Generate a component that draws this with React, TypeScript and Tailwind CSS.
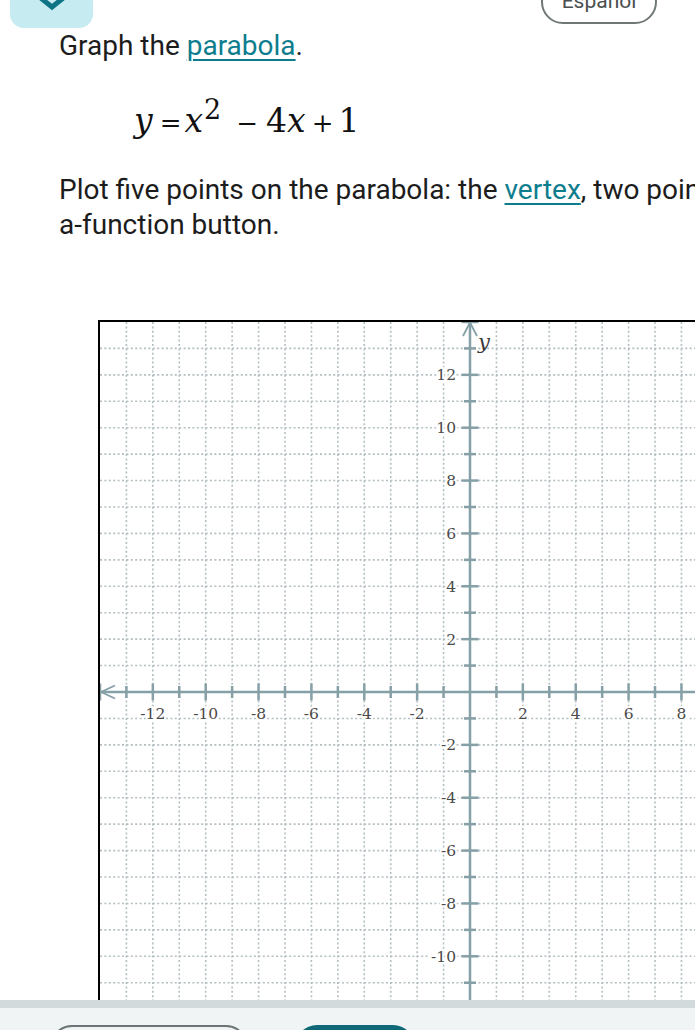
import React from "react";

const U = 26.43;
const O = 370;
const SIZE = 740;
const AXIS = "#85a0a6";
const GRID = "#b3bec1";
const LABEL = "#4a4a4a";

function range(a: number, b: number) {
  const r: number[] = [];
  for (let i = a; i <= b; i++) r.push(i);
  return r;
}

function Graph() {
  const idx = range(-14, 14).filter((i) => i !== 0);
  return (
    <svg width={SIZE} height={SIZE} viewBox={`0 0 ${SIZE} ${SIZE}`} className="block">
      {idx
        .filter((i) => i !== -14)
        .map((i) => (
          <line
            key={"v" + i}
            x1={O + i * U}
            y1={0}
            x2={O + i * U}
            y2={SIZE}
            stroke={GRID}
            strokeWidth={1.6}
            strokeDasharray="2 2.4"
          />
        ))}
      {idx
        .filter((i) => i !== 14)
        .map((i) => (
          <line
            key={"h" + i}
            x1={0}
            y1={O - i * U}
            x2={SIZE}
            y2={O - i * U}
            stroke={GRID}
            strokeWidth={1.6}
            strokeDasharray="2 2.4"
          />
        ))}
      <line x1={1} y1={O} x2={SIZE} y2={O} stroke={AXIS} strokeWidth={2.5} />
      <line x1={O} y1={1} x2={O} y2={SIZE} stroke={AXIS} strokeWidth={2.5} />
      <polyline points={`15,${O - 6.5} 1,${O} 15,${O + 6.5}`} fill="none" stroke={AXIS} strokeWidth={1.8} />
      <polyline points={`${O - 7},14 ${O},0.5 ${O + 7},14`} fill="none" stroke={AXIS} strokeWidth={1.8} />
      {idx.map((i) => {
        const len = i % 2 === 0 ? 8.5 : 6;
        const x = O + i * U;
        return <line key={"tx" + i} x1={x} y1={O - len} x2={x} y2={O + len} stroke={AXIS} strokeWidth={2.5} />;
      })}
      {idx.map((i) => {
        const len = i % 2 === 0 ? 8.5 : 6;
        const y = O - i * U;
        return <line key={"ty" + i} x1={O - len} y1={y} x2={O + len} y2={y} stroke={AXIS} strokeWidth={2.5} />;
      })}
      {idx
        .filter((i) => i % 2 === 0 && Math.abs(i) < 14)
        .map((i) => (
          <text
            key={"lx" + i}
            x={O + i * U}
            y={O + 27}
            textAnchor="middle"
            fontFamily="'DejaVu Serif', serif"
            fontSize={15.5}
            fill={LABEL}
            stroke="#ffffff"
            strokeWidth={4}
            paintOrder="stroke"
          >
            {i < 0 ? "-" + Math.abs(i) : String(i)}
          </text>
        ))}
      {idx
        .filter((i) => i % 2 === 0 && Math.abs(i) < 14)
        .map((i) => (
          <text
            key={"ly" + i}
            x={O - 14}
            y={O - i * U + 5.5}
            textAnchor="end"
            fontFamily="'DejaVu Serif', serif"
            fontSize={15.5}
            fill={LABEL}
            stroke="#ffffff"
            strokeWidth={4}
            paintOrder="stroke"
          >
            {i < 0 ? "-" + Math.abs(i) : String(i)}
          </text>
        ))}
      <text x={O + 8} y={27} fontFamily="'DejaVu Serif', serif" fontStyle="italic" fontSize={21} fill="#3a3a3a">
        y
      </text>
    </svg>
  );
}

export default function App() {
  return (
    <div className="relative w-[695px] h-[1030px] overflow-hidden bg-white font-['Roboto',sans-serif] text-[#1c1c1c]">
      <div className="flex h-[28px] items-start justify-between">
        <div className="ml-[10px] flex h-[28px] w-[83px] justify-center rounded-b-[14px] bg-[#c6ecf1]">
          <svg width="40" height="14" viewBox="0 0 40 14" className="overflow-visible">
            <path d="M5 -5 L20 7 L35 -5" fill="none" stroke="#0e7384" strokeWidth={5} />
          </svg>
        </div>
        <div className="mr-[38px] -mt-[20px] flex h-[44px] w-[116px] items-center justify-center rounded-full border-2 border-[#6f7777] text-[21px] text-[#4a4f4f]">
          Español
        </div>
      </div>

      <p className="pl-[59px] text-[28px] leading-[35px]">
        Graph the{" "}
        <span className="text-[#0d7d8e] underline decoration-[#0d7d8e] decoration-2 underline-offset-[4px]">
          parabola
        </span>
        .
      </p>

      <div className="mt-[38px] flex h-[40px] items-baseline pl-[134px] font-['DejaVu_Serif',serif] text-[33px] leading-[40px] text-[#111]">
        <span className="italic">y</span>
        <span className="ml-[7px] text-[26px]">=</span>
        <span className="ml-[3px] italic">x</span>
        <span className="relative -top-[13px] ml-[1px] text-[27px]">2</span>
        <span className="ml-[15px] text-[26px]">−</span>
        <span className="ml-[8px]">4</span>
        <span className="italic">x</span>
        <span className="ml-[6px] text-[26px]">+</span>
        <span className="ml-[5px]">1</span>
      </div>

      <p className="mt-[31px] whitespace-nowrap pl-[59px] text-[28px] leading-[35px]">
        Plot five points on the parabola: the{" "}
        <span className="text-[#0d7d8e] underline decoration-[#0d7d8e] decoration-2 underline-offset-[4px]">
          vertex
        </span>
        , two points to the left of the vertex, and two points to the right of the vertex. Then click on the graph-
        <br />
        a-function button.
      </p>

      <div className="ml-[98px] mt-[78px] w-[742px] border-l-2 border-t-2 border-black">
        <Graph />
      </div>

      <div className="absolute left-0 right-0 top-[1000px] flex h-[30px] items-start gap-[47px] border-t-[8px] border-[#d3dadc] bg-[#f0f4f4] pl-[50px] pt-[17px]">
        <div className="h-[44px] w-[198px] shrink-0 rounded-full border-2 border-[#6c7575] bg-[#f0f4f4]" />
        <div className="h-[44px] w-[120px] shrink-0 rounded-full bg-[#0e6878]" />
      </div>
    </div>
  );
}
